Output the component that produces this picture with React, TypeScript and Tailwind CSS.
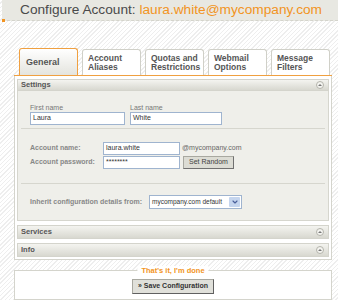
import { ChevronDown } from "lucide-react";

const Collapse = () => (
  <span className="ml-auto flex h-[8px] w-[8px] items-center justify-center rounded-full border border-[#b4b4ac] bg-[#f4f4f0]">
    <span className="h-0 w-0 border-x-[2px] border-b-[2px] border-x-transparent border-b-[#777]" />
  </span>
);

const SectionBar = ({ title, h }: { title: string; h: string }) => (
  <div className={`flex items-center border border-[#d4d4cc] bg-[linear-gradient(#f4f4f0,#d8d8d0)] pl-[3px] pr-[4px] ${h}`}>
    <span className="text-[7.5px] font-bold leading-none text-[#555]">{title}</span>
    <Collapse />
  </div>
);

const Input = ({ value, w }: { value: string; w: string }) => (
  <div className={`flex h-[13px] items-center whitespace-nowrap border border-[#9fb4cf] bg-white px-[2px] text-[7px] text-[#333] ${w}`}>
    {value}
  </div>
);

const tabs = ["Account\nAliases", "Quotas and\nRestrictions", "Webmail\nOptions", "Message\nFilters"];

export default function App() {
  return (
    <div className="relative h-[300px] w-[338px] overflow-hidden whitespace-nowrap bg-[repeating-linear-gradient(135deg,#ffffff_0px,#ffffff_2px,#eeeeee_2px,#eeeeee_3px)] font-['Liberation_Sans',Arial,sans-serif]">
      <div className="ml-[2px] flex h-[21px] items-center border-b border-dashed border-[#d4d4cc] bg-[#e8e8e2] pl-[18px] text-[13.7px] leading-none text-[#4a4a4a]">
        Configure Account:&nbsp;<span className="text-[#f29423]">laura.white@mycompany.com</span>
      </div>
      <div className="absolute left-[2px] top-[19px] h-[3px] w-[3px] bg-[#f29423]" />

      <div className="ml-[14px] mt-[27px] w-[318px]">
        <div className="flex gap-[4px] pl-[5px]">
          <div className="flex h-[27px] w-[59px] items-center rounded-t-[3px] border border-b-0 border-[#f0a040] bg-[linear-gradient(#ffffff,#e4e4de)] pl-[6px] pt-[2px] text-[9px] font-bold text-[#555]">
            General
          </div>
          {tabs.map((t) => (
            <div
              key={t}
              className="mt-[1px] flex h-[26px] w-[59px] items-center whitespace-pre rounded-t-[3px] border border-b-0 border-[#d0d0c8] bg-white pl-[5px] text-[8.5px] font-bold leading-[9px] text-[#555]"
            >
              {t}
            </div>
          ))}
        </div>
        <div className="border-t-[1.5px] border-[#f0a040] bg-white">
          <div className="border-x border-b border-[#d4d4cc] px-[2px] pb-[2px] pt-[3px]">
            <SectionBar title="Settings" h="h-[12px]" />
            <div className="border-x border-b border-[#d6d6ce] bg-[#efefea] px-[3px] pb-[11px]">
              <div className="flex gap-[5px] border-b border-[#d6d6ce] px-[9px] pb-[3px] pt-[12px]">
                <div className="flex flex-col">
                  <span className="text-[7px] leading-[9px] text-[#777]">First name</span>
                  <Input value="Laura" w="w-[95px]" />
                </div>
                <div className="flex flex-col">
                  <span className="text-[7px] leading-[9px] text-[#777]">Last name</span>
                  <Input value="White" w="w-[92px]" />
                </div>
              </div>
              <div className="flex flex-col gap-[1px] border-b border-[#d6d6ce] px-[9px] pb-[14px] pt-[13px] text-[7px]">
                <div className="flex items-center">
                  <span className="w-[73px] font-bold text-[#888]">Account name:</span>
                  <Input value="laura.white" w="w-[77px]" />
                  <span className="ml-[2px] text-[#666]">@mycompany.com</span>
                </div>
                <div className="flex items-center">
                  <span className="w-[73px] font-bold text-[#888]">Account password:</span>
                  <Input value="********" w="w-[77px]" />
                  <span className="ml-[3px] flex h-[13px] items-center border border-[#a8a8a0] border-b-[#707070] border-r-[#707070] bg-[#dcdcd4] px-[5px] text-[7px] text-[#444]">
                    Set Random
                  </span>
                </div>
              </div>
              <div className="flex items-center px-[9px] pt-[11px] text-[7px]">
                <span className="w-[119px] font-bold text-[#888]">Inherit configuration details from:</span>
                <div className="flex h-[14px] w-[93px] items-center justify-between border border-[#9fb4cf] bg-white pl-[2px] text-[6.5px] text-[#333]">
                  mycompany.com default
                  <span className="mr-[1px] flex h-[10px] w-[11px] items-center justify-center rounded-[1px] bg-[#c5d5ee]">
                    <ChevronDown size={8} strokeWidth={3.5} className="text-[#4a5f9a]" />
                  </span>
                </div>
              </div>
            </div>
            <div className="mt-[4px]">
              <SectionBar title="Services" h="h-[14px]" />
            </div>
            <div className="mt-[4px]">
              <SectionBar title="Info" h="h-[14px]" />
            </div>
          </div>
        </div>

        <div className="relative mt-[10px] flex h-[30px] justify-center border border-[#d4d4cc] bg-white pt-[8px]">
          <span className="absolute -top-[5px] left-1/2 -translate-x-1/2 bg-white px-[4px] text-[7.5px] font-bold leading-[9px] text-[#f29423]">
            That's it, I'm done
          </span>
          <span className="flex h-[15px] items-center border border-[#a8a8a0] border-b-[#606060] border-r-[#606060] bg-[#e0e0da] px-[5px] text-[7px] font-bold text-[#333]">
            » Save Configuration
          </span>
        </div>
      </div>
    </div>
  );
}
